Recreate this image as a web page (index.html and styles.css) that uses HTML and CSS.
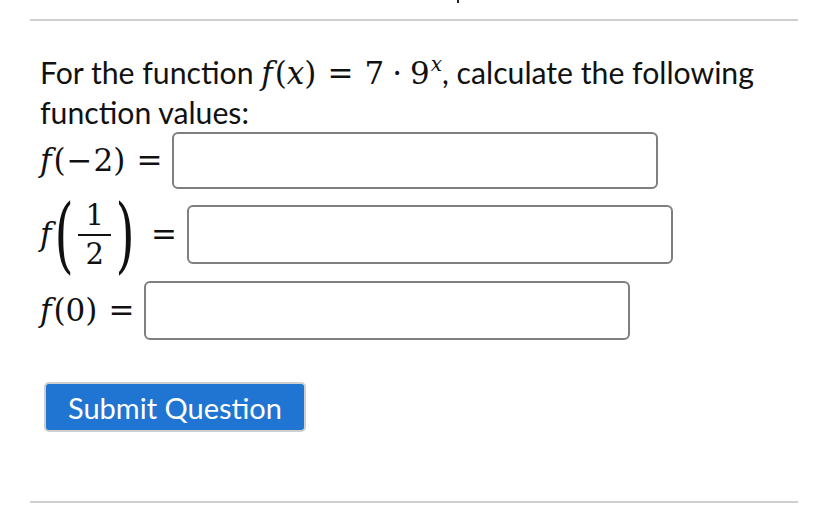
FILE: index.html
```html
<!DOCTYPE html>
<html>
<head>
<meta charset="utf-8">
<link rel="stylesheet" href="styles.css">
</head>
<body>
<div class="page">
  <div class="clip"><span class="clip-mark"></span></div>
  <hr class="rule top">
  <div class="question">
    <p class="prompt">For the function <span class="m"><i class="fi">f</i>(<i>x</i>)<span class="op">=</span>7<span class="dot">·</span>9<sup><i>x</i></sup></span>, calculate the following function values:</p>
    <div class="row r1">
      <span class="m label"><i class="fi">f</i>(<span class="minus">−</span>2)<span class="eq eq1">=</span></span>
      <span class="box"></span>
    </div>
    <div class="row r2">
      <span class="m label"><i class="fi">f</i><span class="paren">(</span><span class="frac"><span class="num">1</span><span class="den">2</span></span><span class="paren">)</span><span class="eq eq2">=</span></span>
      <span class="box"></span>
    </div>
    <div class="row r3">
      <span class="m label"><i class="fi">f</i>(0)<span class="eq eq3">=</span></span>
      <span class="box"></span>
    </div>
    <button class="submit">Submit Question</button>
  </div>
  <hr class="rule bottom">
</div>
</body>
</html>
```
FILE: styles.css
```css
html, body {
  margin: 0;
  padding: 0;
  background: #fff;
}
.page {
  width: 828px;
  height: 505px;
  position: relative;
  overflow: hidden;
  font-family: "Lato", "Open Sans", sans-serif;
  color: #111;
}
.clip {
  height: 19px;
  position: relative;
}
.clip-mark {
  position: absolute;
  left: 457px;
  top: 0;
  width: 2px;
  height: 3px;
  background: #222;
}
.rule {
  border: 0;
  height: 2px;
  background: #cfcfcf;
  margin: 0 30px;
}
.question {
  padding: 0 40px;
  height: 480px;
  overflow: hidden;
}
.prompt {
  margin: 31px 0 0 0;
  font-size: 30.2px;
  line-height: 40px;
  width: 740px;
}
.m {
  font-family: "DejaVu Serif", "Liberation Serif", serif;
  font-size: 31px;
  line-height: 1;
}
.m i {
  font-style: italic;
}
.fi {
  margin-right: 2px;
}
.m sup {
  font-size: 20px;
  line-height: 0;
  vertical-align: 13px;
  margin-left: 1px;
}
.op {
  margin: 0 11px;
}
.dot {
  margin: 0 8px;
}
.minus {
  margin: 0 1px;
}
.row {
  display: flex;
  align-items: center;
  height: 59px;
}
.label {
  white-space: nowrap;
  display: flex;
  align-items: center;
}
.eq {
  margin: 0 9px 0 10px;
}
.eq1 {
  margin: 0 10px 0 11px;
}
.eq2 {
  margin-left: 15px;
  margin-right: 10px;
}
.eq3 {
  margin: 0 10px 0 11px;
}
.box {
  display: block;
  width: 482px;
  border: 2px solid #7f7f7f;
  border-radius: 6px;
  height: 55px;
  box-sizing: content-box;
}
.r1 {
  height: 57px;
}
.r1 .box {
  height: 53px;
}
.r2 {
  margin-top: 16px;
}
.r3 {
  margin-top: 17px;
}
.paren {
  font-size: 82px;
  line-height: 1;
  transform: scaleX(0.6);
  display: inline-block;
  font-weight: 300;
  margin: 0 -5px;
}
.frac {
  display: inline-flex;
  flex-direction: column;
  align-items: center;
  margin: 0 3px;
  font-size: 29px;
}
.num {
  border-bottom: 2px solid #111;
  padding: 0 7px;
  line-height: 37px;
}
.den {
  line-height: 37px;
}
.submit {
  display: block;
  margin-top: 42px;
  margin-left: 4px;
  width: 262px;
  height: 50px;
  background: #1f75d1;
  color: #fff;
  border: 2px solid #cfcfcf;
  border-radius: 5px;
  font-family: "Lato", "Open Sans", sans-serif;
  font-size: 29px;
  padding: 0;
}
.bottom {
  margin-top: 0;
}
```
